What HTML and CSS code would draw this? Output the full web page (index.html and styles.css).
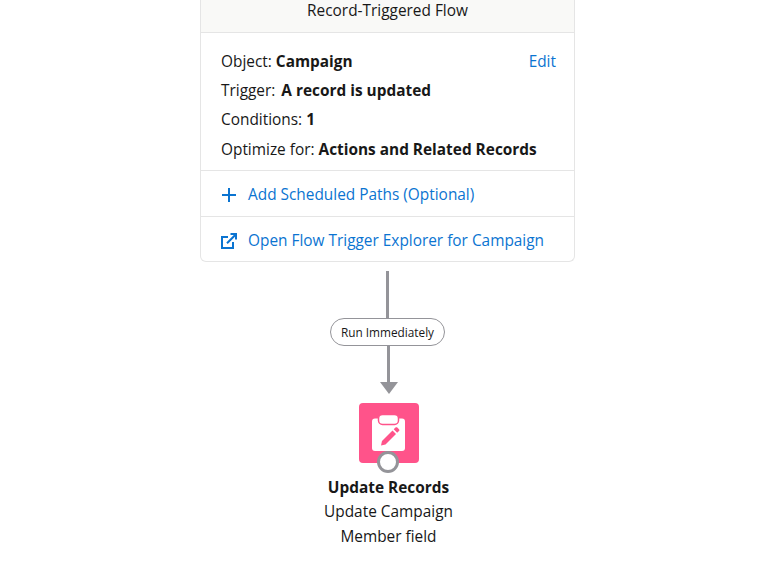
FILE: index.html
```html
<!DOCTYPE html>
<html lang="en">
<head>
  <meta charset="UTF-8" />
  <title>Record-Triggered Flow</title>
  <link rel="stylesheet" href="styles.css">
</head>
<body>

  <div class="canvas">

    <!-- Start card -->
    <div class="start-card">
      <div class="card-header">Record-Triggered Flow</div>

      <div class="card-details">
        <div class="detail-row">
          <span>Object: <b>Campaign</b></span>
          <a href="#" class="link">Edit</a>
        </div>
        <div class="detail-row"><span>Trigger: <b class="trigger-value">A record is updated</b></span></div>
        <div class="detail-row"><span>Conditions: <b>1</b></span></div>
        <div class="detail-row"><span>Optimize for: <b>Actions and Related Records</b></span></div>
      </div>

      <a href="#" class="card-action link">
        <svg class="action-icon" viewBox="0 0 16 16"><path d="M8 1v14M1 8h14" fill="none" stroke="#0b74d1" stroke-width="2"/></svg>
        Add Scheduled Paths (Optional)
      </a>
      <a href="#" class="card-action link">
        <svg class="action-icon" viewBox="0 0 16 16"><path d="M7 4H1v11h11V9M6 10.200 14.500 1.700M9.500 1h5.500v5.500" fill="none" stroke="#0b74d1" stroke-width="2"/></svg>
        Open Flow Trigger Explorer for Campaign
      </a>
    </div>

    <!-- Connector -->
    <div class="line line-top"></div>
    <div class="pill">Run Immediately</div>

    <div class="flow-bottom">
      <div class="line line-bottom"></div>
      <div class="arrow"></div>

      <!-- Update Records element -->
      <div class="node-icon">
        <svg width="33" height="36" viewBox="0 0 33 36">
          <rect x="0" y="3.500" width="33" height="32.500" rx="3" fill="#fff"/>
          <rect x="6.500" y="-0.500" width="20" height="10" rx="4" fill="#fff" stroke="#ff538a" stroke-width="1.500"/>
          <path d="M9 30.500l1-4.500 10.500-10.500 3.500 3.500-10.500 10.500z" fill="#ff538a"/>
          <path d="M21.700 14.300l1.800-1.800c.5-.5 1.300-.5 1.800 0l1.700 1.700c.5.500.5 1.300 0 1.800l-1.800 1.800z" fill="#ff538a"/>
        </svg>
        <span class="node-handle"></span>
      </div>
      <div class="node-label">
        <b>Update Records</b>
        <span>Update Campaign</span>
        <span>Member field</span>
      </div>
    </div>

  </div>

</body>
</html>
```

FILE: styles.css
```css
* {
  box-sizing: border-box;
  margin: 0;
  padding: 0;
}

body {
  background: #fff;
  color: #181818;
  font-family: "Open Sans", "Noto Sans", sans-serif;
  font-size: 15.4px;
}

a {
  text-decoration: none;
}

.link {
  color: #0b74d1;
}

.canvas {
  width: 775px;
  display: flex;
  flex-direction: column;
  align-items: center;
}

.start-card {
  width: 375px;
  height: 262px;
  border: 1px solid #e5e5e5;
  border-top: none;
  border-radius: 0 0 6px 6px;
}

.card-header {
  height: 33px;
  padding-bottom: 12px;
  background: #f9f9f7;
  border-bottom: 1px solid #e5e5e5;
  display: flex;
  align-items: center;
  justify-content: center;
}

.card-details {
  height: 138px;
  padding: 14px 18px 0 20px;
  border-bottom: 1px solid #e5e5e5;
}

.detail-row {
  height: 29px;
  display: flex;
  align-items: center;
  justify-content: space-between;
}

.detail-row:last-child {
  padding-top: 2px;
}

.trigger-value {
  margin-left: 2px;
}

.card-action {
  height: 45px;
  padding: 2px 0 0 20px;
  display: flex;
  align-items: center;
  gap: 11px;
}

.card-action + .card-action {
  height: 46px;
  border-top: 1px solid #e5e5e5;
}

.action-icon {
  width: 16px;
  height: 16px;
}

.line {
  width: 3px;
  background: #949499;
}

.line-top {
  height: 47px;
  margin-top: 9px;
}

.pill {
  width: 115px;
  height: 28px;
  border: 1px solid #949499;
  border-radius: 14px;
  font-size: 11.8px;
  display: flex;
  align-items: center;
  justify-content: center;
}

.flow-bottom {
  padding-left: 2px;
  display: flex;
  flex-direction: column;
  align-items: center;
}

.line-bottom {
  height: 36px;
}

.arrow {
  width: 0;
  height: 0;
  border-left: 9px solid transparent;
  border-right: 9px solid transparent;
  border-top: 12px solid #949499;
}

.node-icon {
  position: relative;
  width: 60px;
  height: 60px;
  margin-top: 9px;
  background: #ff538a;
  border-radius: 4px;
  display: flex;
  align-items: center;
  justify-content: center;
}

.node-handle {
  position: absolute;
  left: 18px;
  top: 48px;
  width: 22px;
  height: 22px;
  background: #fff;
  border: 3px solid #949499;
  border-radius: 50%;
}

.node-label {
  margin-top: 12.7px;
  display: flex;
  flex-direction: column;
  align-items: center;
  line-height: 24.4px;
}
```
